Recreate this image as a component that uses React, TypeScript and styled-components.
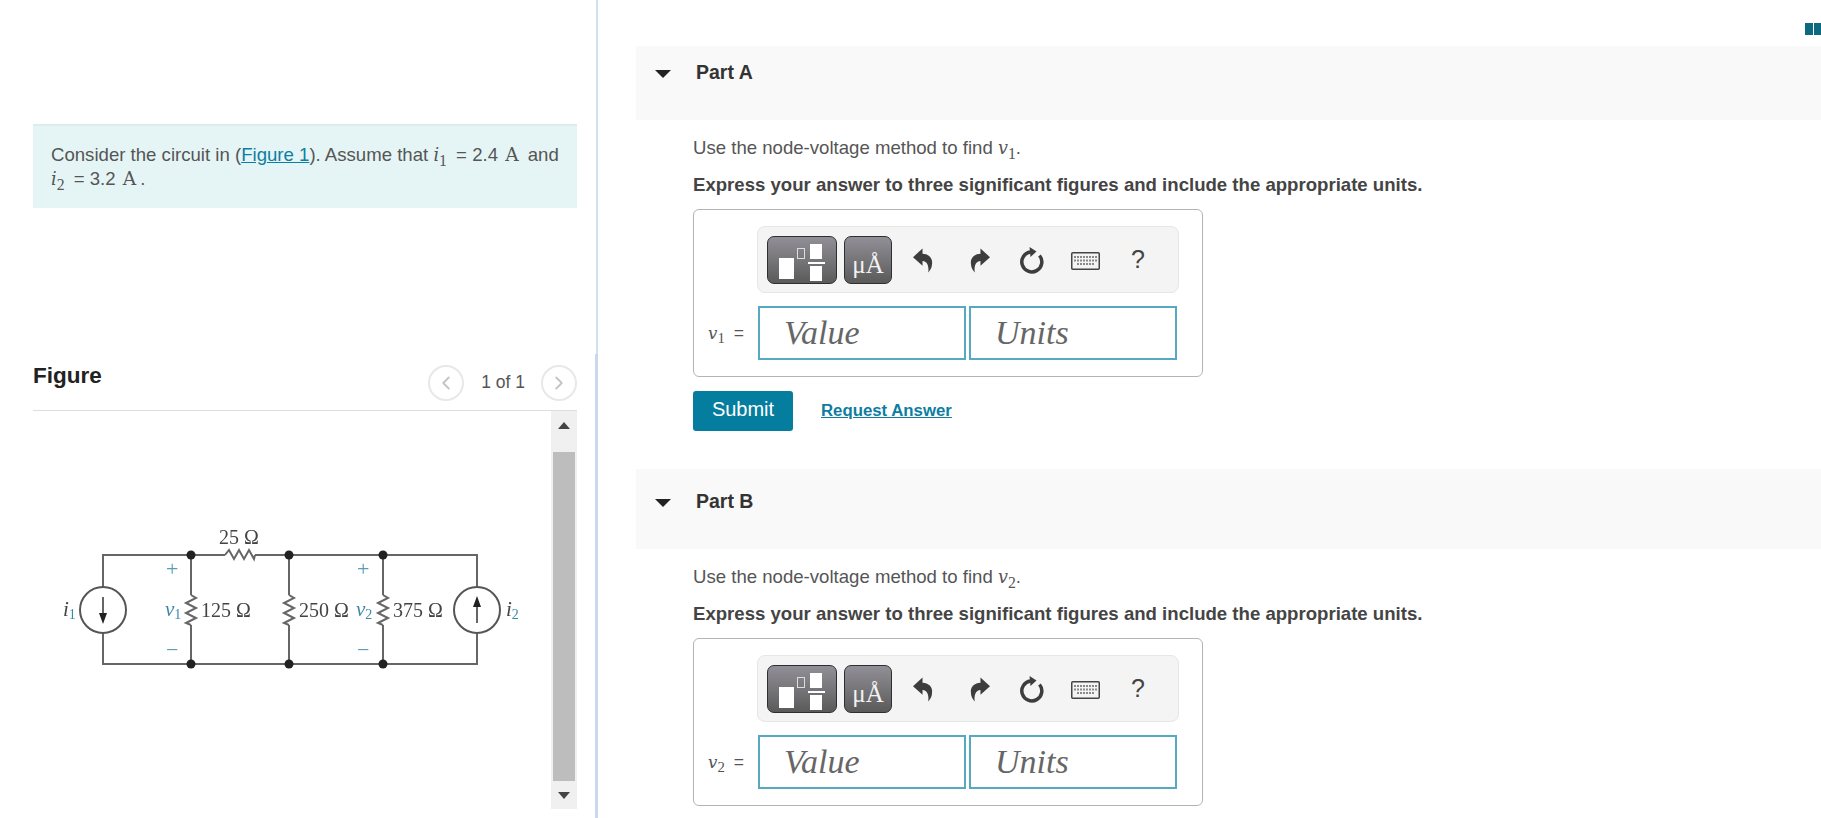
import React from 'react';
import styled, { createGlobalStyle } from 'styled-components';
import { ChevronLeft, ChevronRight } from 'lucide-react';

const GlobalStyle = createGlobalStyle`
  html, body {
    margin: 0;
    padding: 0;
    height: 100%;
    overflow: hidden;
    background: #fff;
    font-family: "Liberation Sans", Arial, sans-serif;
    color: #555;
  }
`;

const Page = styled.div`
  display: flex;
  width: 1821px;
  height: 818px;
  overflow: hidden;
`;

const LeftPanel = styled.div`
  width: 544px;
  flex: none;
  padding: 124px 18px 0 33px;
`;

const InfoBox = styled.div`
  background: #e5f5f6;
  border-top: 2px solid #dcecec;
  padding: 17px 18px 0;
  height: 65px;
  font-size: 18.6px;
  line-height: 24px;
`;

const Link = styled.a`
  color: #0d7ea1;
  text-decoration: underline;
`;

const FigureHeader = styled.div`
  display: flex;
  align-items: center;
  justify-content: space-between;
  height: 47px;
  margin-top: 155px;
  border-bottom: 1px solid #dedede;
`;

const FigureTitle = styled.div`
  font-size: 22.5px;
  font-weight: bold;
  color: #222;
  margin-top: -21px;
`;

const Pager = styled.div`
  display: flex;
  align-items: center;
  gap: 15px;
  margin-top: -8px;
  font-size: 17.5px;
`;

const PagerCount = styled.span`
  margin: 0 1px 0 2px;
`;

const PagerButton = styled.div`
  width: 36px;
  height: 36px;
  box-sizing: border-box;
  border: 2px solid #e8e8e8;
  border-radius: 50%;
  color: #c4c4c4;
  display: flex;
  align-items: center;
  justify-content: center;
`;

const FigureBody = styled.div`
  display: flex;
  height: 398px;
`;

const CircuitSvg = styled.svg`
  flex: 1;
  height: 398px;
  display: block;
  filter: blur(0.35px);
`;

const Scrollbar = styled.div`
  width: 26px;
  flex: none;
  background: #f0f0f0;
  display: flex;
  flex-direction: column;
  align-items: center;
`;

const ScrollArrow = styled.div<{ $dir: 'up' | 'down' }>`
  height: 28px;
  flex: none;
  display: flex;
  align-items: center;
  justify-content: center;
  padding-bottom: ${(p) => (p.$dir === 'up' ? '13px' : '0')};
  &::before {
    content: '';
    border-left: 6px solid transparent;
    border-right: 6px solid transparent;
    ${(p) => (p.$dir === 'up' ? 'border-bottom: 7px solid #444;' : 'border-top: 7px solid #444;')}
  }
`;

const ScrollThumb = styled.div`
  width: 22px;
  flex: 1;
  background: #bdbdbd;
`;

const Divider = styled.div`
  width: 3px;
  flex: none;
  display: flex;
  flex-direction: column;
`;

const DividerPart = styled.div<{ $wide?: boolean }>`
  background: ${(p) => (p.$wide ? '#c9d8ea' : '#d3e0ee')};
  width: ${(p) => (p.$wide ? '3px' : '2px')};
  margin-left: ${(p) => (p.$wide ? '0' : '1px')};
  height: ${(p) => (p.$wide ? 'auto' : '354px')};
  flex: ${(p) => (p.$wide ? '1' : 'none')};
`;

const RightPanel = styled.div`
  flex: 1;
  padding-left: 38px;
  min-width: 0;
`;

const TopStrip = styled.div`
  height: 23px;
  padding-top: 23px;
  display: flex;
  justify-content: flex-end;
`;

const BookMark = styled.div`
  width: 16px;
  height: 12px;
  display: flex;
  gap: 1px;
  &::before,
  &::after {
    content: '';
    flex: 1;
    background: #0c6a80;
  }
`;

const PartHeader = styled.div<{ $height: number; $top: number }>`
  display: flex;
  align-items: flex-start;
  height: ${(p) => p.$height}px;
  background: #f9f9f9;
  padding-top: ${(p) => p.$top}px;
  box-sizing: border-box;
`;

const Caret = styled.div`
  width: 0;
  height: 0;
  margin: 9px 25px 0 19px;
  border-left: 8px solid transparent;
  border-right: 8px solid transparent;
  border-top: 8px solid #222;
`;

const PartTitle = styled.div`
  font-size: 19.5px;
  font-weight: bold;
  color: #333;
  line-height: 22px;
`;

const PartBody = styled.div<{ $bottom: number }>`
  padding: 16px 0 ${(p) => p.$bottom}px 57px;
`;

const Prompt = styled.div`
  font-size: 18.6px;
  line-height: 24px;
  height: 24px;
`;

const Instruction = styled.div`
  font-size: 18.6px;
  font-weight: bold;
  line-height: 24px;
  height: 24px;
  margin-top: 13px;
  color: #444;
`;

const AnswerBox = styled.div`
  width: 510px;
  height: 168px;
  box-sizing: border-box;
  margin-top: 12px;
  border: 1px solid #b4b4b4;
  border-radius: 6px;
  padding: 16px 0 0 14px;
`;

const Toolbar = styled.div`
  display: flex;
  align-items: center;
  width: 422px;
  height: 67px;
  box-sizing: border-box;
  margin-left: 49px;
  padding-left: 9px;
  background: #f4f4f4;
  border: 1px solid #e6e6e6;
  border-radius: 8px;
`;

const ToolButton = styled.div<{ $width: number }>`
  width: ${(p) => p.$width}px;
  height: 48px;
  margin-right: 7px;
  box-sizing: border-box;
  border: 1px solid #2f2f2f;
  border-radius: 7px;
  background: linear-gradient(#929097, #5a5a5a);
  color: #f2f2f2;
  display: flex;
  align-items: flex-end;
  justify-content: center;
  font-family: "Liberation Serif", "Times New Roman", serif;
  font-size: 25px;
  line-height: 36px;
`;

const ToolIcon = styled.svg<{ $left: number }>`
  flex: none;
  display: block;
  margin-left: ${(p) => p.$left}px;
  margin-top: 2px;
  fill: #3d3d3d;
`;

const HelpMark = styled.span`
  margin-left: 31px;
  font-size: 25px;
  color: #444;
`;

const AnswerRow = styled.div`
  display: flex;
  align-items: center;
  margin-top: 13px;
`;

const AnswerLabel = styled.div`
  width: 50px;
  flex: none;
  font-size: 17.5px;
  white-space: nowrap;
`;

const AnswerInput = styled.input<{ $gap?: number }>`
  width: 208px;
  height: 54px;
  box-sizing: border-box;
  margin-left: ${(p) => p.$gap ?? 0}px;
  padding: 0 0 0 24px;
  border: 2px solid #57a9c3;
  border-radius: 0;
  outline: none;
  font-family: "Liberation Serif", "Times New Roman", serif;
  font-style: italic;
  font-size: 34px;
  &::placeholder {
    color: #666;
    opacity: 1;
  }
`;

const Actions = styled.div`
  display: flex;
  align-items: center;
  margin-top: 14px;
`;

const SubmitButton = styled.button`
  width: 100px;
  height: 40px;
  padding: 0 0 3px;
  border: none;
  border-radius: 3px;
  background: #047d9f;
  color: #fff;
  font-family: inherit;
  font-size: 20px;
`;

const RequestLink = styled(Link)`
  margin: -1px 0 0 28px;
  font-size: 16.8px;
  font-weight: bold;
`;

const MathVar = styled.span`
  font-family: "DejaVu Serif", "Liberation Serif", serif;
  font-style: italic;
  font-size: 0.95em;
  line-height: 0;
`;

const MathSub = styled.sub<{ $after?: number }>`
  font-family: "Liberation Serif", "Times New Roman", serif;
  font-size: 0.85em;
  line-height: 0;
  margin-right: ${(p) => p.$after ?? 4}px;
`;

const MathRoman = styled.span`
  font-family: "DejaVu Serif", "Liberation Serif", serif;
  font-size: 1em;
  line-height: 0;
  margin: 0 4px 0 2px;
`;

const Wire = styled.path`
  fill: none;
  stroke: #666;
  stroke-width: 2;
`;

const Node = styled.circle`
  fill: #222;
`;

const Source = styled.circle`
  fill: #fff;
  stroke: #555;
  stroke-width: 2;
`;

const Label = styled.text`
  font-family: "Liberation Serif", "Times New Roman", serif;
  font-size: 20px;
  fill: #444;
`;

const VoltLabel = styled(Label)`
  fill: #3f86a8;
  font-style: italic;
  font-size: 21px;
`;

const SignLabel = styled(Label)`
  fill: #5a9ab8;
  font-size: 22px;
`;

const CurrentLabel = styled(Label)`
  font-style: italic;
  font-size: 21px;
`;

const SubLabel = styled.tspan`
  font-size: 14px;
  font-style: normal;
`;

const vZig = (x: number) =>
  `M${x} 595 l5 3 l-10 5 l10 5 l-10 5 l10 5 l-10 5 l5 2`;

const Circuit = () => (
  <CircuitSvg viewBox="33 411 518 398">
    <Wire d="M103 587 V555 H225 M255 555 H477 V587 M477 633 V664 H103 V633" />
    <Wire d="M225 555 l4 -5 l5 9 l5 -9 l5 9 l5 -9 l5 9 l1 -4" />
    <Wire d={`M191 555 V595 ${vZig(191)} M191 625 V664`} />
    <Wire d={`M289 555 V595 ${vZig(289)} M289 625 V664`} />
    <Wire d={`M383 555 V595 ${vZig(383)} M383 625 V664`} />
    {[191, 289, 383].map((x) => (
      <React.Fragment key={x}>
        <Node cx={x} cy={555} r={4.5} />
        <Node cx={x} cy={664} r={4.5} />
      </React.Fragment>
    ))}
    <Source cx={103} cy={610} r={23} />
    <Source cx={477} cy={610} r={23} />
    <Wire d="M103 597 V621 M477 599 V623" />
    <path d="M99 613 L103 624 L107 613 Z M473 607 L477 596 L481 607 Z" fill="#222" />
    <Label x="219" y="544">25 Ω</Label>
    <Label x="201" y="617">125 Ω</Label>
    <Label x="299" y="617">250 Ω</Label>
    <Label x="393" y="617">375 Ω</Label>
    <VoltLabel x="165" y="616">v<SubLabel dy="3">1</SubLabel></VoltLabel>
    <VoltLabel x="356" y="616">v<SubLabel dy="3">2</SubLabel></VoltLabel>
    <SignLabel x="166" y="576">+</SignLabel>
    <SignLabel x="166" y="657">−</SignLabel>
    <SignLabel x="357" y="576">+</SignLabel>
    <SignLabel x="357" y="657">−</SignLabel>
    <CurrentLabel x="63" y="616">i<SubLabel dy="3" fill="#3f86a8">1</SubLabel></CurrentLabel>
    <CurrentLabel x="506" y="616">i<SubLabel dy="3" fill="#3f86a8">2</SubLabel></CurrentLabel>
  </CircuitSvg>
);

const TemplateIcon = () => (
  <svg width="68" height="46" viewBox="0 0 68 46">
    <path fill="#fff" d="M11 21h15v21H11z M42 7h12v15H42z M42 29h12v15H42z M40 25h17v2H40z" />
    <rect x="29.5" y="11.5" width="7" height="10" fill="none" stroke="#ddd" />
  </svg>
);

const UNDO = 'M0 9 L10 0 V5.5 C16 5.5 21 10 20 16 C20 20 18 23 16 25 C17 19 15 13 10 13 V18 Z';

const ToolRow = () => (
  <Toolbar>
    <ToolButton $width={70}><TemplateIcon /></ToolButton>
    <ToolButton $width={48}>μÅ</ToolButton>
    <ToolIcon $left={14} width="20" height="25" viewBox="0 0 21 25"><path d={UNDO} /></ToolIcon>
    <ToolIcon $left={37} width="20" height="25" viewBox="0 0 21 25"><path d={UNDO} transform="matrix(-1 0 0 1 21 0)" /></ToolIcon>
    <ToolIcon $left={30} width="24" height="27" viewBox="0 0 24 27">
      <path d="M10.5 5 A10 10 0 1 0 19.5 8.5" fill="none" stroke="#3d3d3d" strokeWidth="3.5" />
      <path d="M9.5 0 L16.5 4.5 L10.5 10 Z" />
    </ToolIcon>
    <ToolIcon $left={27} width="29" height="18" viewBox="0 0 29 18">
      <rect x="0.75" y="0.75" width="27.5" height="16.5" rx="1" fill="#f4f4f4" stroke="#444" strokeWidth="1.5" />
      <path fill="none" stroke="#8a8a8a" strokeWidth="2" strokeDasharray="2 1" d="M3 5 H26 M3 8.5 H26 M6 12 H23" />
    </ToolIcon>
    <HelpMark>?</HelpMark>
  </Toolbar>
);

const Answer = ({ sub }: { sub: string }) => (
  <AnswerBox>
    <ToolRow />
    <AnswerRow>
      <AnswerLabel><MathVar>v</MathVar><MathSub>{sub}</MathSub> =</AnswerLabel>
      <AnswerInput placeholder="Value" />
      <AnswerInput $gap={3} placeholder="Units" />
    </AnswerRow>
  </AnswerBox>
);

const App: React.FC = () => (
  <Page>
    <GlobalStyle />
    <LeftPanel>
      <InfoBox>
        Consider the circuit in (<Link href="#">Figure 1</Link>). Assume that{' '}
        <MathVar>i</MathVar><MathSub>1</MathSub> = 2.4 <MathRoman>A</MathRoman> and{' '}
        <MathVar>i</MathVar><MathSub>2</MathSub> = 3.2 <MathRoman>A</MathRoman>.
      </InfoBox>
      <FigureHeader>
        <FigureTitle>Figure</FigureTitle>
        <Pager>
          <PagerButton><ChevronLeft size={22} /></PagerButton>
          <PagerCount>1 of 1</PagerCount>
          <PagerButton><ChevronRight size={22} /></PagerButton>
        </Pager>
      </FigureHeader>
      <FigureBody>
        <Circuit />
        <Scrollbar>
          <ScrollArrow $dir="up" />
          <ScrollThumb />
          <ScrollArrow $dir="down" />
        </Scrollbar>
      </FigureBody>
    </LeftPanel>
    <Divider>
      <DividerPart />
      <DividerPart $wide />
    </Divider>
    <RightPanel>
      <TopStrip><BookMark /></TopStrip>
      <PartHeader $height={74} $top={15}>
        <Caret />
        <PartTitle>Part A</PartTitle>
      </PartHeader>
      <PartBody $bottom={38}>
        <Prompt>Use the node-voltage method to find <MathVar>v</MathVar><MathSub $after={0}>1</MathSub>.</Prompt>
        <Instruction>Express your answer to three significant figures and include the appropriate units.</Instruction>
        <Answer sub="1" />
        <Actions>
          <SubmitButton>Submit</SubmitButton>
          <RequestLink href="#">Request Answer</RequestLink>
        </Actions>
      </PartBody>
      <PartHeader $height={80} $top={21}>
        <Caret />
        <PartTitle>Part B</PartTitle>
      </PartHeader>
      <PartBody $bottom={0}>
        <Prompt>Use the node-voltage method to find <MathVar>v</MathVar><MathSub $after={0}>2</MathSub>.</Prompt>
        <Instruction>Express your answer to three significant figures and include the appropriate units.</Instruction>
        <Answer sub="2" />
      </PartBody>
    </RightPanel>
  </Page>
);

export default App;
